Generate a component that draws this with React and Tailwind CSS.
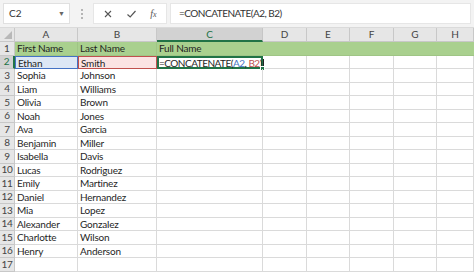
import React from 'react'

const cols = ['A', 'B', 'C', 'D', 'E', 'F', 'G', 'H']
const widths = ['w-[63px]', 'w-[79px]', 'w-[106px]', 'w-[44px]', 'w-[43px]', 'w-[44px]', 'w-[43px]', 'flex-1']

const people = [
  ['Ethan', 'Smith'],
  ['Sophia', 'Johnson'],
  ['Liam', 'Williams'],
  ['Olivia', 'Brown'],
  ['Noah', 'Jones'],
  ['Ava', 'Garcia'],
  ['Benjamin', 'Miller'],
  ['Isabella', 'Davis'],
  ['Lucas', 'Rodriguez'],
  ['Emily', 'Martinez'],
  ['Daniel', 'Hernandez'],
  ['Mia', 'Lopez'],
  ['Alexander', 'Gonzalez'],
  ['Charlotte', 'Wilson'],
  ['Henry', 'Anderson'],
  ['', ''],
  ['', ''],
]

const font = { fontFamily: 'Lato, "Open Sans", sans-serif' }

const RowHead = ({ n, selected }) => (
  <div
    className={`w-[15px] shrink-0 flex items-center justify-center text-[10px] border-b ${
      selected
        ? 'bg-[#d2d2d2] text-[#217346] border-r-2 border-r-[#217346] border-b-[#c6c6c6]'
        : 'bg-[#e6e6e6] text-[#444] border-r border-[#c8c8c8]'
    }`}
  >
    {n}
  </div>
)

export default function App() {
  return (
    <div className="w-[474px] h-[272px] overflow-hidden bg-white text-[#1f1f1f]" style={font}>
      {/* formula bar */}
      <div className="h-[28px] bg-[#f3f3f3] flex items-center px-[3px] gap-[3px] border-b border-[#dadada]">
        <div className="w-[67px] h-[21px] bg-white border border-[#e0e0e0] flex items-center justify-between pl-[5px] pr-[4px]">
          <span className="text-[10px] text-[#333]">C2</span>
          <span className="text-[7px] text-[#666]">▼</span>
        </div>
        <div className="w-[17px] flex flex-col items-center gap-[2px]">
          <span className="w-[2px] h-[2px] bg-[#b5b5b5]" />
          <span className="w-[2px] h-[2px] bg-[#b5b5b5]" />
          <span className="w-[2px] h-[2px] bg-[#b5b5b5]" />
        </div>
        <div className="w-[74px] h-[21px] bg-white border border-[#e6e6e6] flex items-center justify-around px-[3px]">
          <svg width="10" height="10" viewBox="0 0 10 10">
            <path d="M2 2 L8 8 M8 2 L2 8" stroke="#555" strokeWidth="1.1" />
          </svg>
          <svg width="11" height="10" viewBox="0 0 11 10">
            <path d="M1.5 5.5 L4.2 8 L9.5 2" stroke="#555" strokeWidth="1.2" fill="none" />
          </svg>
          <span className="text-[10px] italic text-[#555]" style={{ fontFamily: '"Liberation Serif", serif' }}>
            f<span className="text-[8px]">x</span>
          </span>
        </div>
        <div className="flex-1 h-[21px] bg-white border border-[#e6e6e6] flex items-center pl-[8px]">
          <span className="text-[10px] tracking-[-0.5px] text-[#333] whitespace-nowrap">=CONCATENATE(A2, B2)</span>
        </div>
      </div>

      {/* column headers */}
      <div className="flex h-[14px]">
        <div className="w-[15px] shrink-0 bg-[#e6e6e6] border-r border-b border-[#c8c8c8] relative">
          <svg className="absolute right-[2px] bottom-[2px]" width="8" height="8" viewBox="0 0 8 8">
            <path d="M8 0 L8 8 L0 8 Z" fill="#b8b8b8" />
          </svg>
        </div>
        {cols.map((c, i) => (
          <div
            key={c}
            className={`${widths[i]} shrink-0 flex items-center justify-center text-[10px] border-r ${
              c === 'C'
                ? 'bg-[#d2d2d2] text-[#217346] border-b-2 border-b-[#217346] border-r-[#c6c6c6]'
                : 'bg-[#e6e6e6] text-[#444] border-b border-[#c8c8c8]'
            }`}
          >
            {c}
          </div>
        ))}
      </div>

      {/* row 1 headings */}
      <div className="flex h-[13.5px]">
        <RowHead n={1} />
        <div className="flex flex-1 bg-[#a9d08e] border-b border-[#9fc585] text-[10px] tracking-[-0.2px] leading-[13px]">
          <div className="w-[63px] shrink-0 pl-[2px] border-r border-[#9fc585] whitespace-nowrap">First Name</div>
          <div className="w-[79px] shrink-0 pl-[2px] border-r border-[#9fc585] whitespace-nowrap">Last Name</div>
          <div className="w-[106px] shrink-0 pl-[2px] whitespace-nowrap">Full Name</div>
          <div className="flex-1" />
        </div>
      </div>

      {people.map(([first, last], i) => {
        const n = i + 2
        const active = n === 2
        return (
          <div key={n} className="flex h-[13.5px] text-[10px] tracking-[-0.2px]">
            <RowHead n={n < 18 ? n : ''} selected={active} />
            <div
              className={`w-[63px] shrink-0 leading-[12px] pl-[2px] whitespace-nowrap ${
                active ? 'bg-[#dde7f5] border border-[#4472c4]' : 'border-r border-b border-[#dadada]'
              }`}
            >
              {first}
            </div>
            <div
              className={`w-[79px] shrink-0 leading-[12px] pl-[2px] whitespace-nowrap ${
                active ? 'bg-[#fbe3e3] border border-[#c0504d]' : 'border-r border-b border-[#dadada]'
              }`}
            >
              {last}
            </div>
            <div
              className={`w-[106px] shrink-0 leading-[10px] relative whitespace-nowrap ${
                active ? 'border-2 border-[#217346] tracking-[-0.5px]' : 'border-r border-b border-[#dadada]'
              }`}
            >
              {active && (
                <>
                  <span>=CONCATENATE(</span>
                  <span className="text-[#4472c4]">A2</span>
                  <span>, </span>
                  <span className="text-[#c0504d]">B2</span>
                  <span>)</span>
                  <span className="inline-block w-[1px] h-[10px] bg-[#222] align-middle ml-[1px]" />
                  <span className="absolute -right-[4px] -bottom-[4px] w-[5px] h-[5px] bg-[#217346] border border-white" />
                </>
              )}
            </div>
            {widths.slice(3).map((w, j) => (
              <div key={j} className={`${w} shrink-0 border-r border-b border-[#dadada]`} />
            ))}
          </div>
        )
      })}
    </div>
  )
}
